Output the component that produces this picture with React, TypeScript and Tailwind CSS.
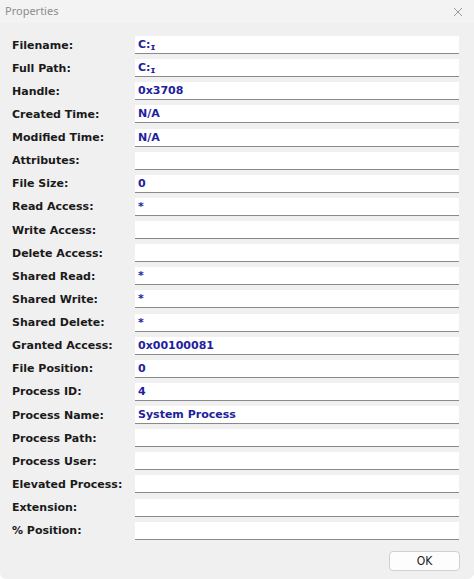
import React from 'react';

// Property rows: label and (optional) value
const rows: { label: string; value?: React.ReactNode }[] = [
  { label: 'Filename:', value: <PathValue /> },
  { label: 'Full Path:', value: <PathValue /> },
  { label: 'Handle:', value: '0x3708' },
  { label: 'Created Time:', value: 'N/A' },
  { label: 'Modified Time:', value: 'N/A' },
  { label: 'Attributes:' },
  { label: 'File Size:', value: '0' },
  { label: 'Read Access:', value: '*' },
  { label: 'Write Access:' },
  { label: 'Delete Access:' },
  { label: 'Shared Read:', value: '*' },
  { label: 'Shared Write:', value: '*' },
  { label: 'Shared Delete:', value: '*' },
  { label: 'Granted Access:', value: '0x00100081' },
  { label: 'File Position:', value: '0' },
  { label: 'Process ID:', value: '4' },
  { label: 'Process Name:', value: 'System Process' },
  { label: 'Process Path:' },
  { label: 'Process User:' },
  { label: 'Elevated Process:' },
  { label: 'Extension:' },
  { label: '% Position:' },
];

function PathValue() {
  return (
    <span>
      C:<span className="relative top-[2px] text-[9px]">ɪ</span>
    </span>
  );
}

export default function App() {
  return (
    <div className="w-[474px] h-[579px] bg-[#f0f0f0] flex flex-col overflow-hidden rounded-b-[6px] font-['DejaVu_Sans',sans-serif]">
      {/* Title bar */}
      <div className="h-[23px] bg-[#f3f3f3] flex items-center justify-between pl-[5px] pr-[11px]">
        <span className="text-[11px] text-[#8c8c8c] font-['Noto_Sans',sans-serif]">Properties</span>
        <svg width="10" height="10" viewBox="0 0 10 10" className="text-[#9a9a9a]">
          <path d="M1 1 L9 9 M9 1 L1 9" stroke="currentColor" strokeWidth="1" fill="none" />
        </svg>
      </div>

      {/* Fields */}
      <div className="flex flex-col gap-[5.14px] pt-[13px] pl-[12px] pr-[15px]">
        {rows.map((row) => (
          <div key={row.label} className="flex items-center h-[18px]">
            <div className="w-[123px] text-[11px] font-bold text-[#1a1a1a] leading-none">
              {row.label}
            </div>
            <div className="flex-1 h-[18px] bg-white border-b border-[#8a8a8a] flex items-center pl-[3px] text-[11px] font-bold text-[#1e1e9e] leading-none">
              {row.value}
            </div>
          </div>
        ))}
      </div>

      {/* Footer */}
      <div className="flex justify-end pr-[14px] pt-[11px]">
        <button className="w-[71px] h-[20px] bg-[#fdfdfd] border border-[#d0d0d0] rounded-[4px] text-[12px] text-[#222] font-['DejaVu_Sans_Condensed','DejaVu_Sans',sans-serif] leading-none">
          OK
        </button>
      </div>
    </div>
  );
}
